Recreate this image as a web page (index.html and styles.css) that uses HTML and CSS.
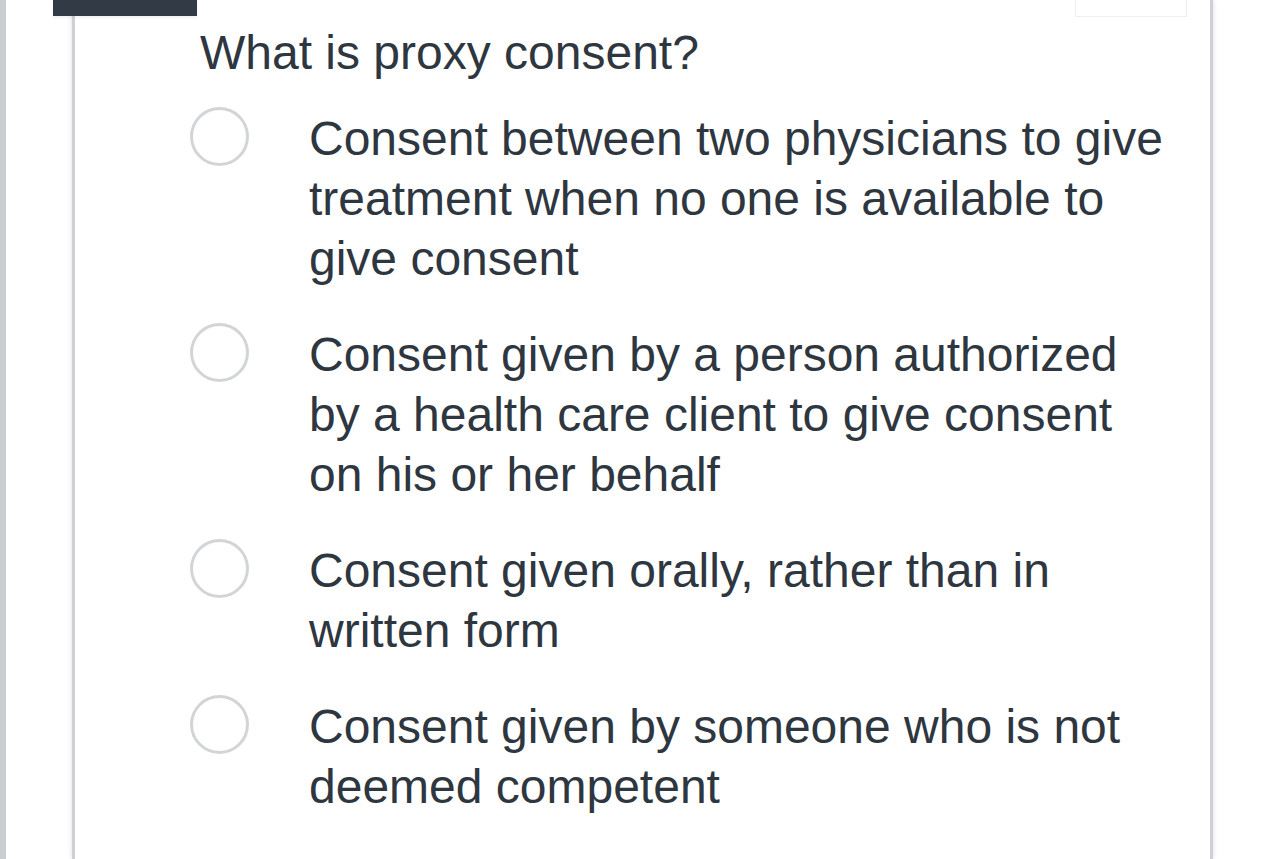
FILE: index.html
```html
<!DOCTYPE html>
<html lang="en">
<head>
<meta charset="utf-8">
<title>Proxy consent question</title>
<link rel="stylesheet" href="styles.css">
</head>
<body>
<div class="page">
  <div class="edge"></div>
  <div class="card">
    <div class="corner-box"></div>
    <h1 class="question">What is proxy consent?</h1>
    <ul class="options">
      <li class="option"><span class="radio"></span><span class="label">Consent between two physicians to give treatment when no one is available to give consent</span></li>
      <li class="option"><span class="radio"></span><span class="label">Consent given by a person authorized by a health care client to give consent on his or her behalf</span></li>
      <li class="option"><span class="radio"></span><span class="label">Consent given orally, rather than in written form</span></li>
      <li class="option"><span class="radio"></span><span class="label">Consent given by someone who is not deemed competent</span></li>
    </ul>
  </div>
  <div class="tab-bar"></div>
</div>
</body>
</html>
```
FILE: styles.css
```css
html, body {
  margin: 0;
  padding: 0;
  background: #ffffff;
}
body {
  font-family: "Liberation Sans", Arial, sans-serif;
  color: #2e3640;
  overflow: hidden;
}
.page {
  position: relative;
  display: flex;
  height: 859px;
}
.edge {
  width: 6px;
  flex-shrink: 0;
  background: #c9ced3;
}
.card {
  position: relative;
  margin-left: 66px;
  width: 1135px;
  border-left: 3px solid #cdd1d5;
  border-right: 3px solid #cdd1d5;
  box-shadow: 0 0 5px rgba(0, 0, 0, 0.14);
  background: #ffffff;
}
.corner-box {
  position: absolute;
  left: 1000px;
  top: -1px;
  width: 110px;
  height: 17px;
  border: 1px solid #efefef;
  border-top: none;
}
.tab-bar {
  position: absolute;
  left: 53px;
  top: 0;
  width: 144px;
  height: 16px;
  background: #323a45;
  box-shadow: 0 2px 3px rgba(0, 0, 0, 0.06);
}
.question {
  margin: 23px 0 0 0;
  padding-left: 125px;
  font-size: 48px;
  font-weight: normal;
  line-height: 60px;
}
.options {
  list-style: none;
  margin: 24px 0 0 0;
  padding: 0 0 0 115px;
  display: flex;
  flex-direction: column;
  gap: 34px;
}
.option {
  display: flex;
  align-items: flex-start;
  gap: 60px;
}
.radio {
  width: 59px;
  height: 59px;
  box-sizing: border-box;
  border: 3px solid #d2d5d8;
  border-radius: 50%;
  flex-shrink: 0;
}
.label {
  width: 860px;
  padding-top: 2px;
  font-size: 48px;
  line-height: 60px;
}
```
